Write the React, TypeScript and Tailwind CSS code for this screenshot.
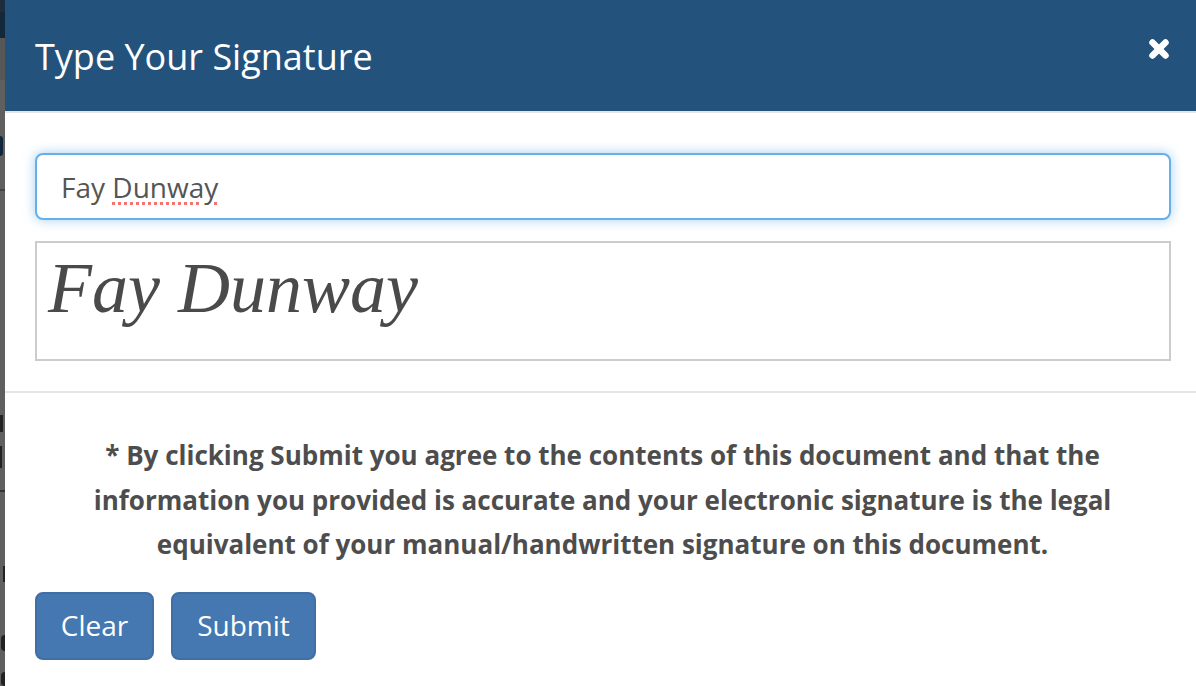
import { X } from "lucide-react";

const sans = "font-['Open_Sans','Noto_Sans',sans-serif]";

// the page behind the dialog, only a sliver of it shows
function Backdrop() {
  return (
    <div className="relative w-[5px] shrink-0 overflow-hidden bg-[#5f5f5f]">
      <div className="h-[12px] bg-[#1d2d3e]" />
      <div className="h-[26px] bg-[#14283c]" />
      <div className="h-[42px] bg-[#575757]" />
      <div className="absolute left-0 top-[136px] h-[20px] w-[3px] rounded-r-full bg-[#10263c]" />
      <div className="absolute left-0 top-[189px] h-[2px] w-[5px] bg-[#444]" />
      <div className="absolute left-0 top-[415px] h-[17px] w-[3px] bg-[#222]" />
      <div className="absolute left-0 top-[446px] h-[22px] w-[2px] bg-[#222]" />
      <div className="absolute left-0 top-[490px] h-[2px] w-[5px] bg-[#333]" />
      <div className="absolute left-[3px] top-[566px] h-[16px] w-[2px] bg-[#222]" />
      <div className="absolute left-[1px] top-[635px] h-[16px] w-[4px] rounded-l-full bg-[#222]" />
      <div className="absolute left-[1px] top-[672px] h-[14px] w-[4px] rounded-l-full bg-[#222]" />
    </div>
  );
}

export default function App() {
  return (
    <div className={`flex h-[686px] w-[1196px] overflow-hidden bg-white ${sans}`}>
      <Backdrop />

      <div className="flex min-w-0 flex-1 flex-col">
        {/* Header */}
        <div className="flex h-[113px] items-start justify-between border-b-2 border-[#e5e5e5] bg-[#23527c] pl-[30px] pr-[24px] text-white">
          <h2 className="mt-[32px] text-[36px] leading-[50px]">Type Your Signature</h2>
          <X size={26} strokeWidth={6} className="mt-[36px]" />
        </div>

        {/* Input + preview */}
        <div className="flex h-[280px] flex-col border-b-2 border-[#e5e5e5] pl-[30px] pr-[25px] pt-[40px]">
          <div className="flex h-[67px] w-full items-center rounded-[8px] border-2 border-[#66afe9] bg-white px-[24px] text-[28px] text-[#555] shadow-[0_0_12px_rgba(102,175,233,0.6)]">
            <span>
              Fay{" "}
              <span className="underline decoration-[#f4736e] decoration-dotted decoration-[3px] underline-offset-[4px]">
                Dunway
              </span>
            </span>
          </div>
          <div className="mt-[21px] flex h-[120px] items-start border-2 border-[#ccc] pl-[11px]">
            <span className="mt-[-3px] font-['Liberation_Serif',serif] text-[72px] italic leading-[96px] text-[#4a4a4a]">
              Fay Dunway
            </span>
          </div>
        </div>

        {/* Footer */}
        <div className="flex flex-1 flex-col px-[30px] pt-[40px]">
          <p className="pl-[4px] text-center text-[26px] font-bold leading-[44.5px] text-[#4d4d4d]">
            * By clicking Submit you agree to the contents of this document and that the
            <br />
            information you provided is accurate and your electronic signature is the legal
            <br />
            equivalent of your manual/handwritten signature on this document.
          </p>
          <div className="mt-[25px] flex gap-[17px]">
            <button className="h-[68px] w-[119px] rounded-[8px] border-2 border-[#3f6fa3] bg-[#4577b0] pb-[2px] text-[28px] text-white">
              Clear
            </button>
            <button className="h-[68px] w-[145px] rounded-[8px] border-2 border-[#3f6fa3] bg-[#4577b0] pb-[2px] text-[28px] text-white">
              Submit
            </button>
          </div>
        </div>
      </div>
    </div>
  );
}
